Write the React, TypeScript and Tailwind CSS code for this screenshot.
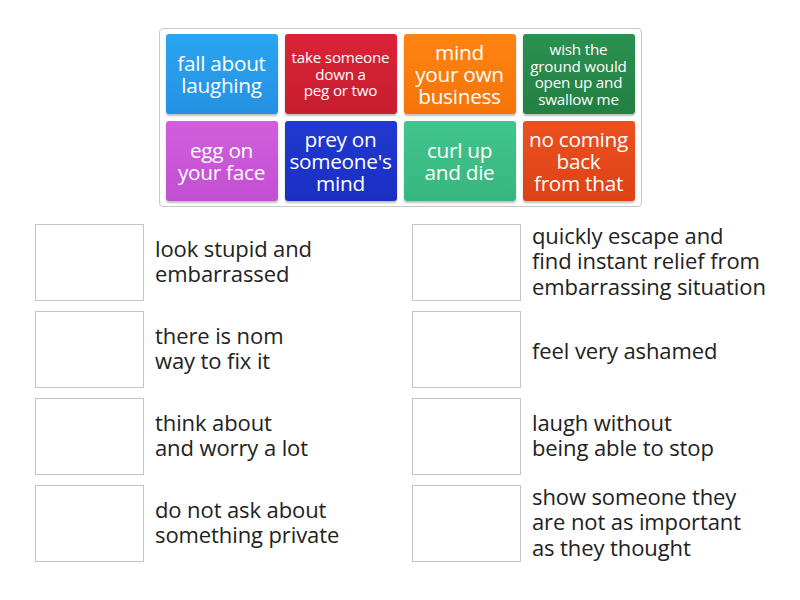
import React from "react";

type Tile = { lines: string[]; from: string; to: string; small?: boolean };

const tiles: Tile[] = [
  { lines: ["fall about", "laughing"], from: "from-[#2aa6f0]", to: "to-[#2590e2]" },
  { lines: ["take someone", "down a", "peg or two"], from: "from-[#db2337]", to: "to-[#c81d30]", small: true },
  { lines: ["mind", "your own", "business"], from: "from-[#ff8412]", to: "to-[#f57408]" },
  { lines: ["wish the", "ground would", "open up and", "swallow me"], from: "from-[#2b9150]", to: "to-[#237f43]", small: true },
  { lines: ["egg on", "your face"], from: "from-[#d15fdd]", to: "to-[#c24fd2]" },
  { lines: ["prey on", "someone's", "mind"], from: "from-[#2139cf]", to: "to-[#1a2fc2]" },
  { lines: ["curl up", "and die"], from: "from-[#41c48d]", to: "to-[#37b680]" },
  { lines: ["no coming", "back", "from that"], from: "from-[#ec5020]", to: "to-[#dd4215]" },
];

const left = [
  ["look stupid and", "embarrassed"],
  ["there is nom", "way to fix it"],
  ["think about", "and worry a lot"],
  ["do not ask about", "something private"],
];
const right = [
  ["quickly escape and", "find instant relief from", "embarrassing situation"],
  ["feel very ashamed"],
  ["laugh without", "being able to stop"],
  ["show someone they", "are not as important", "as they thought"],
];

function Lines({ lines }: { lines: string[] }) {
  return (
    <>
      {lines.map((l, i) => (
        <React.Fragment key={i}>
          {i > 0 && <br />}
          {l}
        </React.Fragment>
      ))}
    </>
  );
}

function Row({ lines }: { lines: string[] }) {
  return (
    <div className="flex items-center h-[77px]">
      <div className="w-[109px] h-[77px] border border-[#c4c4c4] bg-white shrink-0" />
      <div
        className={`ml-[11px] text-[22px] leading-[25.5px] text-[#222] tracking-[-0.1px] whitespace-nowrap ${
          lines.length > 1 ? "pb-[3px]" : "pt-[3px]"
        }`}
      >
        <Lines lines={lines} />
      </div>
    </div>
  );
}

export default function App() {
  return (
    <div
      className="w-[800px] h-[600px] bg-white"
      style={{ fontFamily: "'Open Sans', Lato, sans-serif" }}
    >
      <div className="flex justify-center pt-[28px]">
        <div className="border border-[#c8c8c8] rounded-[4px] px-[6px] pt-[5px] pb-[5px] grid grid-cols-4 gap-[7px] bg-white">
          {tiles.map((t, i) => (
            <div
              key={i}
              className={`w-[112px] h-[80px] rounded-[3px] bg-linear-to-b ${t.from} ${t.to} shadow-[0_2px_2px_rgba(0,0,0,0.25)] flex items-center justify-center text-white text-center font-medium whitespace-nowrap ${
                t.small ? "text-[15.2px] leading-[16.5px] tracking-[-0.2px]" : "text-[20.8px] leading-[22px] tracking-[-0.3px]"
              }`}
            >
              <div>
                <Lines lines={t.lines} />
              </div>
            </div>
          ))}
        </div>
      </div>
      <div className="flex pl-[35px] pt-[17px]">
        <div className="w-[377px] flex flex-col gap-[10px]">
          {left.map((l, i) => (
            <Row key={i} lines={l} />
          ))}
        </div>
        <div className="flex flex-col gap-[10px]">
          {right.map((l, i) => (
            <Row key={i} lines={l} />
          ))}
        </div>
      </div>
    </div>
  );
}
